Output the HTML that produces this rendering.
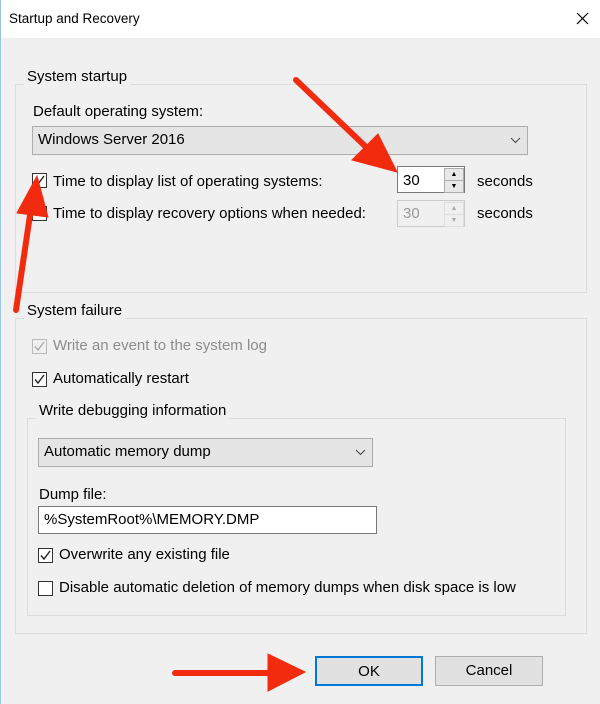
<!DOCTYPE html>
<html><head><style>
body{margin:0;width:600px;height:704px;overflow:hidden;background:#f0f0f0;font-family:"Liberation Sans",sans-serif;font-size:15px;color:#000;position:relative}
.a{position:absolute;white-space:nowrap}
.title{position:absolute;left:0;top:0;width:600px;height:38px;background:#fff}
.grp{position:absolute;border:1px solid #dcdcdc}
.lbl{position:absolute;background:#f0f0f0;padding:0 3px;line-height:16px}
.cb{position:absolute;width:13px;height:13px;border:1px solid #333;background:#fff}
.cmb{position:absolute;background:#e5e5e5;border:1px solid #adadad;box-sizing:border-box;line-height:26px;padding-left:5px}
.btn{position:absolute;background:#e1e1e1;border:1px solid #adadad;box-sizing:border-box;text-align:center;line-height:27px}
</style></head><body>
<div class="title"></div>
<div class="a" style="left:0;top:0;width:1px;height:704px;background:#9cc4e8"></div>
<div class="a" style="left:9px;top:11px;font-size:13.5px">Startup and Recovery</div>
<svg class="a" style="left:576px;top:12px" width="13" height="13"><path d="M1 1L12 12M12 1L1 12" stroke="#000" stroke-width="1.2"/></svg>

<div class="grp" style="left:15px;top:84px;width:570px;height:207px"></div>
<div class="lbl" style="left:24px;top:69px">System startup</div>
<div class="a" style="left:33px;top:103px">Default operating system:</div>
<div class="cmb" style="left:32px;top:126px;width:496px;height:29px">Windows Server 2016</div>
<svg class="a" style="left:510px;top:137px" width="11" height="7"><path d="M1 1L5.5 5.5L10 1" stroke="#444" fill="none"/></svg>
<div class="cb" style="left:32px;top:173px"></div>
<svg class="a" style="left:33px;top:174px" width="13" height="13"><path d="M2 6.5L5 10L11 2" stroke="#222" stroke-width="1.4" fill="none"/></svg>
<div class="a" style="left:53px;top:173px">Time to display list of operating systems:</div>
<div class="a" style="left:397px;top:166px;width:68px;height:27px;background:#fff;border:1px solid #7a7a7a;box-sizing:border-box"></div>
<div class="a" style="left:403px;top:172px">30</div>
<div class="a" style="left:444px;top:168px;width:18px;height:11px;border:1px solid #adadad;background:#e8e8e8;font-size:7px;text-align:center;line-height:11px">▲</div>
<div class="a" style="left:444px;top:180px;width:18px;height:11px;border:1px solid #adadad;background:#e8e8e8;font-size:7px;text-align:center;line-height:11px">▼</div>
<div class="a" style="left:477px;top:173px">seconds</div>
<div class="cb" style="left:32px;top:206px"></div>
<div class="a" style="left:53px;top:205px">Time to display recovery options when needed:</div>
<div class="a" style="left:397px;top:200px;width:68px;height:27px;background:#f0f0f0;border:1px solid #ccc;box-sizing:border-box"></div>
<div class="a" style="left:403px;top:205px;color:#999">30</div>
<div class="a" style="left:444px;top:202px;width:18px;height:11px;border:1px solid #ddd;font-size:7px;color:#aaa;text-align:center;line-height:11px">▲</div>
<div class="a" style="left:444px;top:214px;width:18px;height:11px;border:1px solid #ddd;font-size:7px;color:#aaa;text-align:center;line-height:11px">▼</div>
<div class="a" style="left:477px;top:205px">seconds</div>

<div class="grp" style="left:15px;top:318px;width:570px;height:314px"></div>
<div class="lbl" style="left:24px;top:303px">System failure</div>
<div class="cb" style="left:32px;top:339px;border-color:#bbb;background:#f0f0f0"></div>
<svg class="a" style="left:33px;top:340px" width="13" height="13"><path d="M2 6.5L5 10L11 2" stroke="#aaa" stroke-width="1.4" fill="none"/></svg>
<div class="a" style="left:53px;top:337px;color:#8d8d8d">Write an event to the system log</div>
<div class="cb" style="left:32px;top:372px"></div>
<svg class="a" style="left:33px;top:373px" width="13" height="13"><path d="M2 6.5L5 10L11 2" stroke="#222" stroke-width="1.4" fill="none"/></svg>
<div class="a" style="left:53px;top:370px">Automatically restart</div>

<div class="grp" style="left:27px;top:418px;width:537px;height:196px"></div>
<div class="lbl" style="left:36px;top:403px">Write debugging information</div>
<div class="cmb" style="left:38px;top:438px;width:335px;height:29px">Automatic memory dump</div>
<svg class="a" style="left:355px;top:449px" width="11" height="7"><path d="M1 1L5.5 5.5L10 1" stroke="#444" fill="none"/></svg>
<div class="a" style="left:39px;top:486px">Dump file:</div>
<div class="a" style="left:38px;top:506px;width:339px;height:28px;background:#fff;border:1px solid #7a7a7a;box-sizing:border-box;padding-left:5px;line-height:26px">%SystemRoot%\MEMORY.DMP</div>
<div class="cb" style="left:38px;top:548px"></div>
<svg class="a" style="left:39px;top:549px" width="13" height="13"><path d="M2 6.5L5 10L11 2" stroke="#222" stroke-width="1.4" fill="none"/></svg>
<div class="a" style="left:59px;top:546px">Overwrite any existing file</div>
<div class="cb" style="left:38px;top:581px"></div>
<div class="a" style="left:59px;top:579px">Disable automatic deletion of memory dumps when disk space is low</div>

<div class="btn" style="left:315px;top:656px;width:108px;height:30px;border:2px solid #0078d7">OK</div>
<div class="btn" style="left:435px;top:656px;width:108px;height:30px">Cancel</div>

<svg class="a" style="left:0;top:0" width="600" height="704">
<g fill="#f22a0e" stroke="#f22a0e" stroke-width="6" stroke-linecap="round">
<line x1="296" y1="80" x2="365" y2="146"/>
<polygon points="397,172 352,160 378,134" stroke-width="1"/>
<line x1="16" y1="310" x2="30" y2="215"/>
<polygon points="37,176 48,217 17,213" stroke-width="1"/>
<line x1="175" y1="673" x2="272" y2="673"/>
<polygon points="305,672 268,654 268,691" stroke-width="1"/>
</g></svg>
</body></html>
